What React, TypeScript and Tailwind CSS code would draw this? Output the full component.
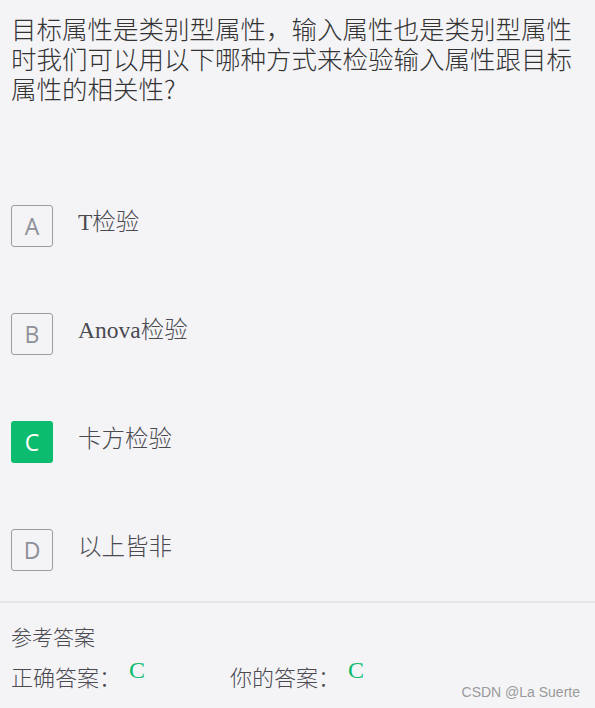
const cjk = "font-['Noto_Sans_CJK_SC',sans-serif]";

const options = [
  { key: "A", latin: "T", rest: "检验", selected: false },
  { key: "B", latin: "Anova", rest: "检验", selected: false },
  { key: "C", latin: "", rest: "卡方检验", selected: true },
  { key: "D", latin: "", rest: "以上皆非", selected: false },
];

const App = () => {
  return (
    <div className={`w-[595px] h-[708px] bg-[#f4f4f7] overflow-hidden relative font-light ${cjk}`}>
      {/* Question */}
      <p className="px-[11px] pt-[13px] text-[25.5px] leading-[30px] text-[#333333]">
        目标属性是类别型属性，输入属性也是类别型属性时我们可以用以下哪种方式来检验输入属性跟目标属性的相关性?
      </p>

      {/* Options */}
      <ul className="mt-[102px] flex flex-col gap-[66px] px-[11px]">
        {options.map((o) => (
          <li key={o.key} className="flex items-center h-[42px]">
            <div
              className={
                o.selected
                  ? "w-[42px] h-[42px] rounded-[3px] bg-[#0bbb6e] text-white flex items-center justify-center text-[23px] font-normal font-['Open_Sans',sans-serif]"
                  : "w-[42px] h-[42px] rounded-[3px] border border-[#9a9ca6] text-[#8e9099] flex items-center justify-center text-[23px] font-normal font-['Open_Sans',sans-serif]"
              }
            >
              {o.key}
            </div>
            <span className="ml-[25px] -mt-[8px] text-[23.5px] text-[#4a4a50]">
              {o.latin && <span className="font-normal font-['Liberation_Serif',serif]">{o.latin}</span>}
              {o.rest}
            </span>
          </li>
        ))}
      </ul>

      {/* Answer */}
      <div className="absolute left-0 right-0 top-[601px] border-t-2 border-[#e6e6ec]">
        <div className="px-[11px] pt-[18px] text-[21px] leading-[30px] text-[#4a4a50]">
          <div>参考答案</div>
          <div className="mt-[10px] flex text-[22px]">
            <div className="w-[219px] flex items-start">
              正确答案：
              <span className="font-normal font-['Liberation_Serif',serif] text-[24px] text-[#0bbb6e] -mt-[6px] ml-[8px]">C</span>
            </div>
            <div className="flex items-start">
              你的答案：
              <span className="font-normal font-['Liberation_Serif',serif] text-[24px] text-[#0bbb6e] -mt-[6px] ml-[8px]">C</span>
            </div>
          </div>
        </div>
      </div>

      <div className="absolute right-[15px] bottom-[5px] text-[14px] font-normal text-[#9a9a9a] font-['Liberation_Sans',sans-serif]">
        CSDN @La Suerte
      </div>
    </div>
  );
};

export default App;
